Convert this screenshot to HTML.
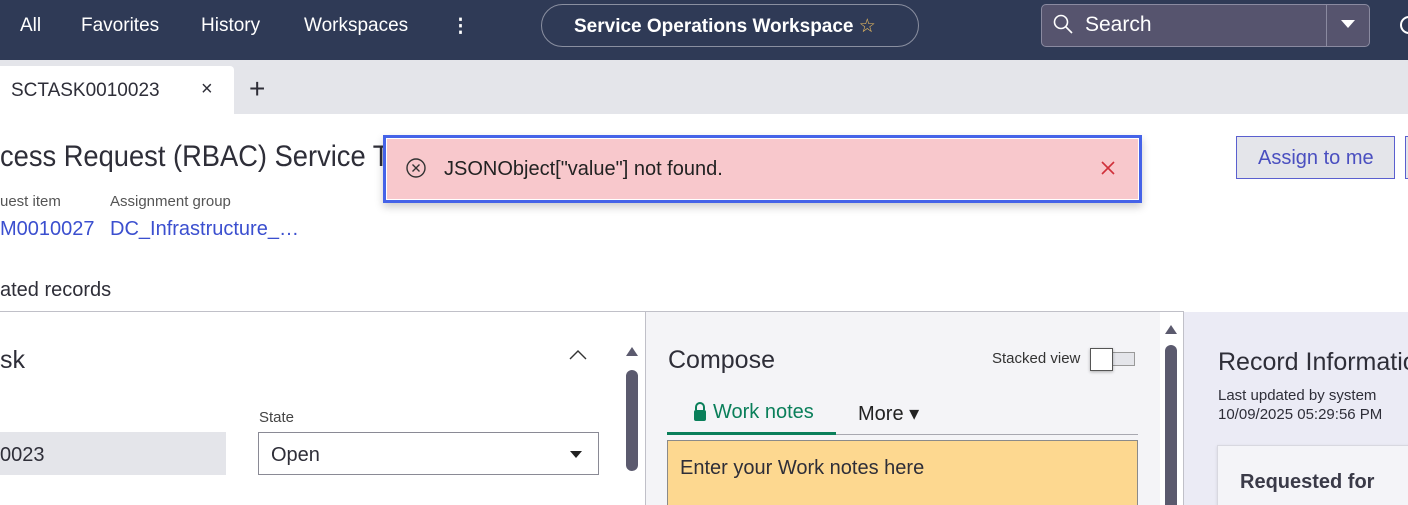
<!DOCTYPE html>
<html><head><meta charset="utf-8"><style>
*{box-sizing:border-box;margin:0;padding:0}
html,body{width:1408px;height:505px;overflow:hidden}
body{position:relative;background:#fff;font-family:"Liberation Sans",sans-serif;color:#2e2e38}
.a{position:absolute;white-space:nowrap}
.nav{left:0;top:0;width:1408px;height:60px;background:#2f3a56}
.nav .t{color:#fff;font-size:19px;top:15px}
</style></head><body>
<div class="a nav">
 <div class="a t" style="left:20px">All</div>
 <div class="a t" style="left:81px">Favorites</div>
 <div class="a t" style="left:201px">History</div>
 <div class="a t" style="left:304px">Workspaces</div>
 <div class="a t" style="left:451px;font-weight:bold">⋮</div>
 <div class="a" style="left:541px;top:4px;width:378px;height:43px;border:1px solid #8a8fa0;border-radius:22px"></div>
 <div class="a t" style="left:574px;font-weight:bold">Service Operations Workspace <span style="color:#f0c060;font-weight:normal">☆</span></div>
 <div class="a" style="left:1041px;top:4px;width:329px;height:43px;background:#56546e;border:1px solid #8a8aa0;border-radius:5px"></div>
 <div class="a" style="left:1326px;top:5px;width:1px;height:41px;background:#8a8aa0"></div>
 <svg class="a" style="left:1052px;top:13px" width="22" height="22" viewBox="0 0 22 22"><circle cx="9" cy="9" r="6.5" fill="none" stroke="#fff" stroke-width="1.6"/><path d="M14 14l6 6" stroke="#fff" stroke-width="1.6"/></svg>
 <div class="a t" style="left:1085px;top:13px;font-size:21px">Search</div>
 <div class="a" style="left:1341px;top:20px;border-left:7px solid transparent;border-right:7px solid transparent;border-top:8px solid #fff"></div>
 <div class="a" style="left:1400px;top:16px;width:18px;height:18px;border:2px solid #fff;border-radius:50%"></div>
</div>
<div class="a" style="left:0;top:60px;width:1408px;height:54px;background:#e4e5ea"></div>
<div class="a" style="left:0;top:66px;width:234px;height:48px;background:#fff;border-radius:0 4px 0 0"></div>
<div class="a" style="left:11px;top:80px;font-size:19px">SCTASK0010023</div>
<div class="a" style="left:201px;top:78px;font-size:20px">×</div>
<div class="a" style="left:249px;top:73px;font-size:28px;font-weight:300">+</div>
<div class="a" style="left:0;top:140px;font-size:30px;color:#2e2e38;transform:scaleX(.91);transform-origin:left">cess Request (RBAC) Service T</div>
<div class="a" style="left:0;top:193px;font-size:15px;color:#555">uest item</div>
<div class="a" style="left:110px;top:193px;font-size:15px;color:#555">Assignment group</div>
<div class="a" style="left:0;top:218px;font-size:20px;color:#3b4fcf">M0010027</div>
<div class="a" style="left:110px;top:218px;font-size:20px;color:#3b4fcf">DC_Infrastructure_…</div>
<div class="a" style="left:383px;top:135px;width:759px;height:68px;border:3px solid #4563e8;background:#f8c8cc;box-shadow:0 4px 8px rgba(0,0,0,.2);outline:1px solid #fff;outline-offset:-4px"></div>
<svg class="a" style="left:405px;top:157px" width="22" height="22" viewBox="0 0 22 22"><circle cx="11" cy="11" r="9" fill="none" stroke="#333" stroke-width="1.4"/><path d="M7.5 7.5l7 7M14.5 7.5l-7 7" stroke="#333" stroke-width="1.4"/></svg>
<div class="a" style="left:444px;top:158px;font-size:20px;color:#222">JSONObject["value"] not found.</div>
<svg class="a" style="left:1100px;top:160px" width="16" height="16" viewBox="0 0 16 16"><path d="M2 2l12 12M14 2L2 14" stroke="#d0303a" stroke-width="1.6"/></svg>
<div class="a" style="left:1236px;top:136px;width:159px;height:43px;background:#e4e5ea;border:1px solid #5a5fcf"></div>
<div class="a" style="left:1258px;top:147px;font-size:20px;color:#4a4fc0">Assign to me</div>
<div class="a" style="left:1405px;top:136px;width:10px;height:43px;border:1px solid #5a5fcf;background:#e4e5ea"></div>
<div class="a" style="left:0;top:279px;font-size:20px">ated records</div>
<div class="a" style="left:0;top:311px;width:1183px;height:1px;background:#c0c0c8"></div>
<div class="a" style="left:0;top:346px;font-size:25px">sk</div>
<svg class="a" style="left:568px;top:348px" width="20" height="14" viewBox="0 0 20 14"><path d="M2 11l8-8 8 8" fill="none" stroke="#333" stroke-width="1.4"/></svg>
<div class="a" style="left:259px;top:409px;font-size:15px;color:#444">State</div>
<div class="a" style="left:0;top:432px;width:226px;height:43px;background:#e4e5ea"></div>
<div class="a" style="left:0;top:444px;font-size:20px">0023</div>
<div class="a" style="left:258px;top:432px;width:341px;height:43px;border:1px solid #8a8a95"></div>
<div class="a" style="left:271px;top:444px;font-size:20px">Open</div>
<div class="a" style="left:570px;top:451px;border-left:6px solid transparent;border-right:6px solid transparent;border-top:7px solid #222"></div>
<div class="a" style="left:626px;top:347px;border-left:6px solid transparent;border-right:6px solid transparent;border-bottom:9px solid #5b5a6e"></div>
<div class="a" style="left:626px;top:370px;width:12px;height:101px;border-radius:6px;background:#5b5a6e"></div>
<div class="a" style="left:645px;top:311px;width:1px;height:194px;background:#c0c0c8"></div>
<div class="a" style="left:646px;top:312px;width:514px;height:193px;background:#f4f4f7"></div>
<div class="a" style="left:668px;top:346px;font-size:25px">Compose</div>
<div class="a" style="left:992px;top:350px;font-size:15px;color:#333">Stacked view</div>
<div class="a" style="left:1101px;top:352px;width:34px;height:14px;background:#e4e5ea;border:1px solid #999"></div>
<div class="a" style="left:1090px;top:348px;width:23px;height:23px;background:#fff;border:1px solid #555;box-shadow:0 1px 3px rgba(0,0,0,.3)"></div>
<svg class="a" style="left:692px;top:401px" width="16" height="21" viewBox="0 0 16 21"><path d="M4 9V6a4 4 0 0 1 8 0v3" fill="none" stroke="#0a7f5a" stroke-width="2"/><rect x="2" y="9" width="12" height="11" rx="2" fill="#0a7f5a"/></svg>
<div class="a" style="left:713px;top:401px;font-size:20px;color:#0a7f5a">Work notes</div>
<div class="a" style="left:858px;top:401px;font-size:20px;color:#222">More ▾</div>
<div class="a" style="left:667px;top:434px;width:471px;height:1px;background:#a8a8b0"></div>
<div class="a" style="left:667px;top:432px;width:169px;height:3px;background:#0a7f5a"></div>
<div class="a" style="left:667px;top:440px;width:471px;height:70px;background:#fdd890;border:1px solid #8a8a8a"></div>
<div class="a" style="left:680px;top:457px;font-size:20px">Enter your Work notes here</div>
<div class="a" style="left:1165px;top:325px;border-left:6px solid transparent;border-right:6px solid transparent;border-bottom:9px solid #5b5a6e"></div>
<div class="a" style="left:1165px;top:345px;width:12px;height:170px;border-radius:6px;background:#5b5a6e"></div>
<div class="a" style="left:1183px;top:311px;width:1px;height:194px;background:#c0c0c8"></div>
<div class="a" style="left:1184px;top:312px;width:224px;height:193px;background:#ebebf5"></div>
<div class="a" style="left:1218px;top:348px;font-size:25px">Record Information</div>
<div class="a" style="left:1218px;top:387px;font-size:15px">Last updated by system</div>
<div class="a" style="left:1218px;top:406px;font-size:15px">10/09/2025 05:29:56 PM</div>
<div class="a" style="left:1217px;top:445px;width:200px;height:70px;background:#f4f4f8;border:1px solid #d8d8e0;box-shadow:0 1px 3px rgba(0,0,0,.1)"></div>
<div class="a" style="left:1240px;top:471px;font-size:20px;font-weight:bold;color:#3a3a48">Requested for</div>
</body></html>
